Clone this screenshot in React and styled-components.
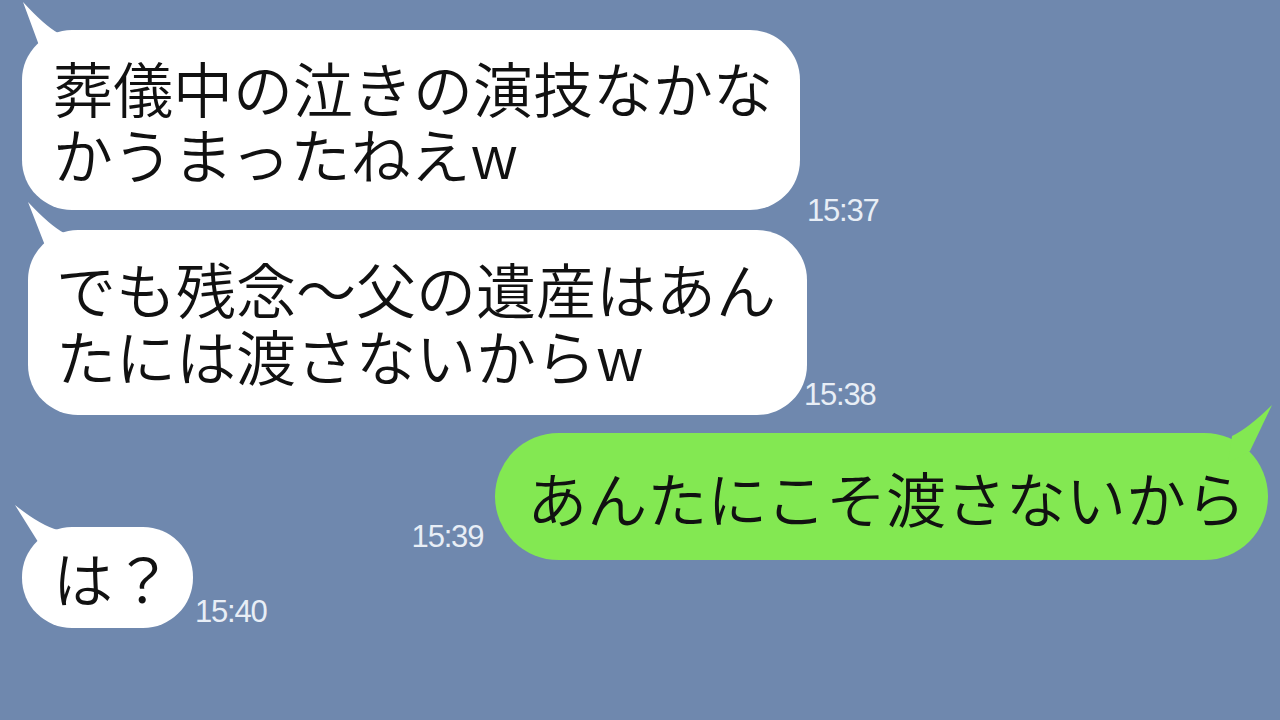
import React from "react";
import styled, { createGlobalStyle } from "styled-components";

const GlobalStyle = createGlobalStyle`
  html, body {
    margin: 0;
    padding: 0;
  }
  body {
    width: 1280px;
    height: 720px;
    overflow: hidden;
    background-color: #6f88ae;
    font-family: "Noto Sans CJK JP", "Noto Sans", sans-serif;
  }
`;

const Chat = styled.div`
  display: flex;
  flex-direction: column;
  width: 1280px;
  height: 720px;
  box-sizing: border-box;
  padding: 30px 12px 0 22px;
  background-color: #6f88ae;
`;

const Row = styled.div`
  display: flex;
  align-items: flex-end;
  justify-content: ${(p) => (p.$out ? "flex-end" : "flex-start")};
  margin-top: ${(p) => p.$mt || 0}px;
  margin-left: ${(p) => p.$indent || 0}px;
`;

const Bubble = styled.div`
  position: relative;
  background-color: ${(p) => (p.$out ? "#83e852" : "#ffffff")};
  color: #111111;
  border-radius: ${(p) => p.$radius || 50}px;
  padding: ${(p) => p.$pad};
  font-size: 60px;
  font-weight: 350;
  line-height: ${(p) => p.$lh || 66}px;
  white-space: nowrap;
`;

const Line = styled.span`
  display: block;
`;

const Time = styled.span`
  font-family: "Liberation Sans", Arial, sans-serif;
  font-size: 31px;
  line-height: 1;
  letter-spacing: -1.2px;
  color: #e8eef6;
  margin-left: ${(p) => p.$ml || 0}px;
  margin-right: ${(p) => p.$mr || 0}px;
  margin-bottom: ${(p) => p.$mb || 0}px;
`;

const TailSvg = styled.svg`
  position: absolute;
  top: -30px;
  width: 70px;
  height: 70px;
  overflow: visible;
  ${(p) =>
    p.$side === "right"
      ? "right: -20px; transform: scaleX(-1);"
      : "left: -20px;"}
`;

// tail tip is given relative to the bubble's top corner on its side
const Tail = ({ side = "left", tx, ty, color }) => {
  const x0 = 20;
  const y0 = 30;
  const tip = [x0 + tx, y0 + ty];
  const lb = [x0 + 18, y0 + 18];
  const rb = [x0 + 36, y0 + 3];
  const ctrl = [(tip[0] + rb[0]) / 2 + 4, (tip[1] + rb[1]) / 2 + 8];
  const d = `M${tip[0]} ${tip[1]} L${lb[0]} ${lb[1]} L${x0 + 40} ${y0 + 30} L${rb[0]} ${rb[1]} Q${ctrl[0]} ${ctrl[1]} ${tip[0]} ${tip[1]} Z`;
  return (
    <TailSvg $side={side} viewBox="0 0 70 70">
      <path d={d} fill={color} />
    </TailSvg>
  );
};

const App = () => {
  return (
    <>
      <GlobalStyle />
      <Chat>
        <Row>
          <Bubble $pad="24px 27px 24px 31px">
            <Tail tx={1} ty={-28} color="#ffffff" />
            <Line>葬儀中の泣きの演技なかな</Line>
            <Line>かうまったねえw</Line>
          </Bubble>
          <Time $ml={7} $mb={-16}>
            15:37
          </Time>
        </Row>

        <Row $mt={20} $indent={6}>
          <Bubble $pad="24px 31px 27px 28px" $lh={67}>
            <Tail tx={0} ty={-28} color="#ffffff" />
            <Line>でも残念〜父の遺産はあん</Line>
            <Line>たには渡さないからw</Line>
          </Bubble>
          <Time $ml={-3} $mb={5}>
            15:38
          </Time>
        </Row>

        <Row $mt={18} $out>
          <Time $mr={12} $mb={8}>
            15:39
          </Time>
          <Bubble $out $radius={64} $pad="31px 22px 30px 32px">
            <Tail side="right" tx={-4} ty={-28} color="#83e852" />
            <Line>あんたにこそ渡さないから</Line>
          </Bubble>
        </Row>

        <Row $mt={-33}>
          <Bubble $pad="17px 20px 18px 31px">
            <Tail tx={-7} ty={-22} color="#ffffff" />
            <Line>は？</Line>
          </Bubble>
          <Time $ml={2} $mb={1}>
            15:40
          </Time>
        </Row>
      </Chat>
    </>
  );
};

export default App;
